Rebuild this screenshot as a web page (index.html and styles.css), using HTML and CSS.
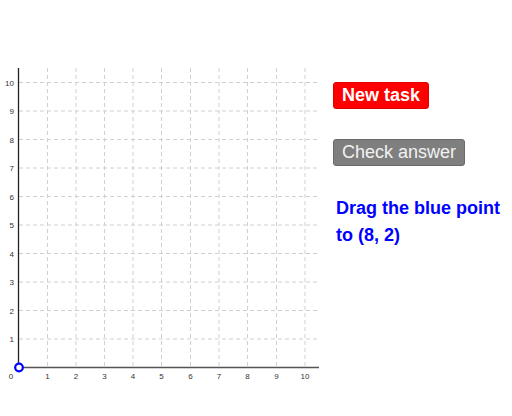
FILE: index.html
```html
<!DOCTYPE html>
<html lang="en">
<head>
    <meta charset="UTF-8">
    <title>Plot the point</title>
    <link rel="stylesheet" href="styles.css">
</head>
<body>
    <div class="applet">
        <svg class="graph" width="325" height="330" viewBox="0 0 325 330">
            <!-- grade tracejada -->
            <g class="grid">
                <line x1="47.5" y1="8" x2="47.5" y2="307"/>
                <line x1="76" y1="8" x2="76" y2="307"/>
                <line x1="104.5" y1="8" x2="104.5" y2="307"/>
                <line x1="133" y1="8" x2="133" y2="307"/>
                <line x1="161.5" y1="8" x2="161.5" y2="307"/>
                <line x1="190.5" y1="8" x2="190.5" y2="307"/>
                <line x1="219" y1="8" x2="219" y2="307"/>
                <line x1="247.5" y1="8" x2="247.5" y2="307"/>
                <line x1="276.5" y1="8" x2="276.5" y2="307"/>
                <line x1="305" y1="8" x2="305" y2="307"/>

                <line x1="19" y1="279" x2="317" y2="279"/>
                <line x1="19" y1="250.5" x2="317" y2="250.5"/>
                <line x1="19" y1="222" x2="317" y2="222"/>
                <line x1="19" y1="193.5" x2="317" y2="193.5"/>
                <line x1="19" y1="165" x2="317" y2="165"/>
                <line x1="19" y1="136.5" x2="317" y2="136.5"/>
                <line x1="19" y1="108" x2="317" y2="108"/>
                <line x1="19" y1="79.5" x2="317" y2="79.5"/>
                <line x1="19" y1="51" x2="317" y2="51"/>
                <line x1="19" y1="22.5" x2="317" y2="22.5"/>
            </g>

            <!-- eixos -->
            <line class="axis-x" x1="18" y1="307.5" x2="319" y2="307.5"/>
            <line class="axis-y" x1="18.5" y1="8" x2="18.5" y2="308"/>

            <g class="labels-y">
                <text x="14" y="282">1</text>
                <text x="14" y="253.5">2</text>
                <text x="14" y="225">3</text>
                <text x="14" y="196.5">4</text>
                <text x="14" y="168">5</text>
                <text x="14" y="139.5">6</text>
                <text x="14" y="111">7</text>
                <text x="14" y="82.5">8</text>
                <text x="14" y="54">9</text>
                <text x="14" y="25.5">10</text>
            </g>
            <g class="labels-x">
                <text x="11" y="318.5">0</text>
                <text x="47.5" y="318.5">1</text>
                <text x="76" y="318.5">2</text>
                <text x="104.5" y="318.5">3</text>
                <text x="133" y="318.5">4</text>
                <text x="161.5" y="318.5">5</text>
                <text x="190.5" y="318.5">6</text>
                <text x="219" y="318.5">7</text>
                <text x="247.5" y="318.5">8</text>
                <text x="276.5" y="318.5">9</text>
                <text x="305" y="318.5">10</text>
            </g>

            <!-- ponto azul -->
            <circle class="point" cx="19" cy="307.5" r="3.8"/>
        </svg>

        <div class="panel">
            <button type="button" class="btn btn-new">New task</button>
            <button type="button" class="btn btn-check">Check answer</button>
            <p class="task">Drag the blue point<br>to (8, 2)</p>
        </div>
    </div>
</body>
</html>
```

FILE: styles.css
```css
* {
    margin: 0;
    padding: 0;
    box-sizing: border-box;
}

body {
    background-color: white;
    font-family: "Liberation Sans", Arial, sans-serif;
}

.applet {
    display: flex;
    padding-top: 60px;
    width: 512px;
    height: 416px;
}

.graph {
    display: block;
    flex: none;
}

.grid line {
    stroke: #d0d0d0;
    stroke-width: 1;
    stroke-dasharray: 4 3;
}

.axis-x {
    stroke: #555;
    stroke-width: 1.3;
}

.axis-y {
    stroke: #222;
    stroke-width: 1.3;
}

.labels-y text,
.labels-x text {
    font-family: "Liberation Sans", Arial, sans-serif;
    font-size: 8px;
    fill: #333;
}

.labels-y text {
    text-anchor: end;
}

.labels-x text {
    text-anchor: middle;
}

.point {
    fill: white;
    stroke: #0000ff;
    stroke-width: 2.2;
}

.panel {
    padding-top: 22px;
    padding-left: 8px;
    display: flex;
    flex-direction: column;
    align-items: flex-start;
}

.btn {
    font-family: "Liberation Sans", Arial, sans-serif;
    font-size: 18px;
    line-height: 21px;
    padding: 2px 8px;
    border-radius: 3px;
    cursor: pointer;
}

.btn-new {
    background-color: #ff0000;
    border: 1px solid #e00000;
    color: white;
    font-weight: bold;
}

.btn-check {
    margin-top: 30px;
    background-color: #7f7f7f;
    border: 1px solid #6a6a6a;
    color: #f2f2f2;
}

.task {
    margin-top: 29px;
    margin-left: 3px;
    color: #0000ff;
    font-size: 18px;
    font-weight: bold;
    line-height: 27px;
}
```
